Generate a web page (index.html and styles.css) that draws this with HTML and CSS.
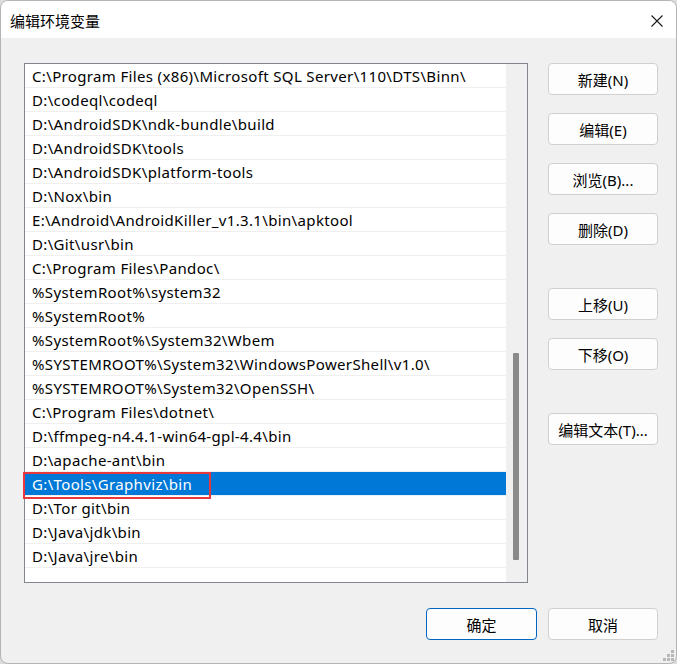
FILE: index.html
```html
<!DOCTYPE html>
<html lang="zh-CN">
<head>
    <meta charset="UTF-8">
    <meta name="viewport" content="width=device-width, initial-scale=1.0">
    <title>编辑环境变量</title>
    <link rel="stylesheet" href="styles.css">
</head>
<body>
    <div class="window">
        <div class="titlebar">
            <span class="title">编辑环境变量</span>
            <button class="close" aria-label="关闭">
                <svg width="12" height="12" viewBox="0 0 12 12">
                    <path d="M0.5 0.5 L11.5 11.5 M11.5 0.5 L0.5 11.5" stroke="#1a1a1a" stroke-width="1.1" fill="none"/>
                </svg>
            </button>
        </div>
        <div class="content">
            <div class="main">
                <div class="listbox">
                    <ul class="items">
                        <li>C:\Program Files (x86)\Microsoft SQL Server\110\DTS\Binn\</li>
                        <li>D:\codeql\codeql</li>
                        <li>D:\AndroidSDK\ndk-bundle\build</li>
                        <li>D:\AndroidSDK\tools</li>
                        <li>D:\AndroidSDK\platform-tools</li>
                        <li>D:\Nox\bin</li>
                        <li>E:\Android\AndroidKiller_v1.3.1\bin\apktool</li>
                        <li>D:\Git\usr\bin</li>
                        <li>C:\Program Files\Pandoc\</li>
                        <li>%SystemRoot%\system32</li>
                        <li>%SystemRoot%</li>
                        <li>%SystemRoot%\System32\Wbem</li>
                        <li>%SYSTEMROOT%\System32\WindowsPowerShell\v1.0\</li>
                        <li>%SYSTEMROOT%\System32\OpenSSH\</li>
                        <li>C:\Program Files\dotnet\</li>
                        <li>D:\ffmpeg-n4.4.1-win64-gpl-4.4\bin</li>
                        <li>D:\apache-ant\bin</li>
                        <li class="selected"><span class="mark"></span>G:\Tools\Graphviz\bin</li>
                        <li>D:\Tor git\bin</li>
                        <li>D:\Java\jdk\bin</li>
                        <li>D:\Java\jre\bin</li>
                    </ul>
                    <div class="scrollbar">
                        <div class="thumb"></div>
                    </div>
                </div>
                <div class="actions">
                    <button class="btn">新建(N)</button>
                    <button class="btn">编辑(E)</button>
                    <button class="btn">浏览(B)...</button>
                    <button class="btn">删除(D)</button>
                    <button class="btn spaced">上移(U)</button>
                    <button class="btn">下移(O)</button>
                    <button class="btn spaced">编辑文本(T)...</button>
                </div>
            </div>
            <div class="footer">
                <button class="btn default">确定</button>
                <button class="btn">取消</button>
            </div>
            <div class="grip">
                <span></span><span></span><span></span><span></span><span></span><span></span>
            </div>
        </div>
    </div>
</body>
</html>
```

FILE: styles.css
```css
html, body {
    margin: 0;
    background: #dcdcdc;
}
body {
    font-family: "Noto Sans", "Noto Sans CJK SC", sans-serif;
    font-size: 15px;
    color: #000;
}
.window {
    width: 677px;
    height: 664px;
    box-sizing: border-box;
    border: 1px solid #b4b4b4;
    border-radius: 8px;
    overflow: hidden;
    display: flex;
    flex-direction: column;
    background: #f0f0f0;
}
.titlebar {
    height: 37px;
    background: #fff;
    display: flex;
    align-items: center;
    justify-content: space-between;
    padding: 0 13px 0 9px;
    flex-shrink: 0;
}
.title {
    font-family: "Noto Sans CJK SC", sans-serif;
    font-size: 15px;
    margin-top: 2px;
}
.close {
    border: 0;
    background: none;
    padding: 0;
    width: 12px;
    height: 12px;
    margin-top: 3px;
    display: flex;
}
.content {
    flex: 1;
    position: relative;
    padding: 25px 18px 0 23px;
}
.main {
    display: flex;
    gap: 20px;
    height: 520px;
}
.listbox {
    width: 504px;
    height: 520px;
    box-sizing: border-box;
    border: 1px solid #82868d;
    background: #fff;
    display: flex;
}
.items {
    list-style: none;
    margin: 0;
    padding: 0;
    flex: 1;
}
.items li {
    position: relative;
    height: 24px;
    box-sizing: border-box;
    border-bottom: 1px solid #efefef;
    padding: 1px 0 0 7px;
    line-height: 23px;
    letter-spacing: 0.35px;
    white-space: nowrap;
    overflow: hidden;
}
.items li.selected {
    background: #0078d7;
    color: #fff;
    overflow: visible;
}
.mark {
    position: absolute;
    left: -2px;
    top: 0;
    width: 188px;
    height: 27px;
    box-sizing: border-box;
    border: 2px solid #e8383d;
}
.scrollbar {
    width: 21px;
    background: #f0f0f0;
    position: relative;
}
.thumb {
    position: absolute;
    left: 7px;
    top: 289px;
    width: 6px;
    height: 207px;
    border-radius: 1px;
    background: #8a8a8a;
}
.actions {
    display: flex;
    flex-direction: column;
    gap: 18px;
}
.btn {
    width: 110px;
    height: 32px;
    box-sizing: border-box;
    border: 1px solid #d0d0d0;
    border-radius: 4px;
    background: #fdfdfd;
    font-family: "Noto Sans", "Noto Sans CJK SC", sans-serif;
    font-size: 15px;
    color: #000;
    padding: 0;
}
.actions .spaced {
    margin-top: 25px;
}
.footer {
    display: flex;
    justify-content: flex-end;
    gap: 11px;
    margin-top: 25px;
}
.btn.default {
    border-color: #0067c0;
    width: 111px;
}
.grip {
    position: absolute;
    right: 2px;
    bottom: 2px;
    width: 11px;
    height: 11px;
    display: grid;
    grid-template-columns: repeat(3, 3px);
    grid-template-rows: repeat(3, 3px);
    gap: 1px;
}
.grip span {
    background: #b8b8b8;
}
.grip span:nth-child(1) { grid-area: 1 / 3; }
.grip span:nth-child(2) { grid-area: 2 / 2; }
.grip span:nth-child(3) { grid-area: 2 / 3; }
.grip span:nth-child(4) { grid-area: 3 / 1; }
.grip span:nth-child(5) { grid-area: 3 / 2; }
.grip span:nth-child(6) { grid-area: 3 / 3; }
```
